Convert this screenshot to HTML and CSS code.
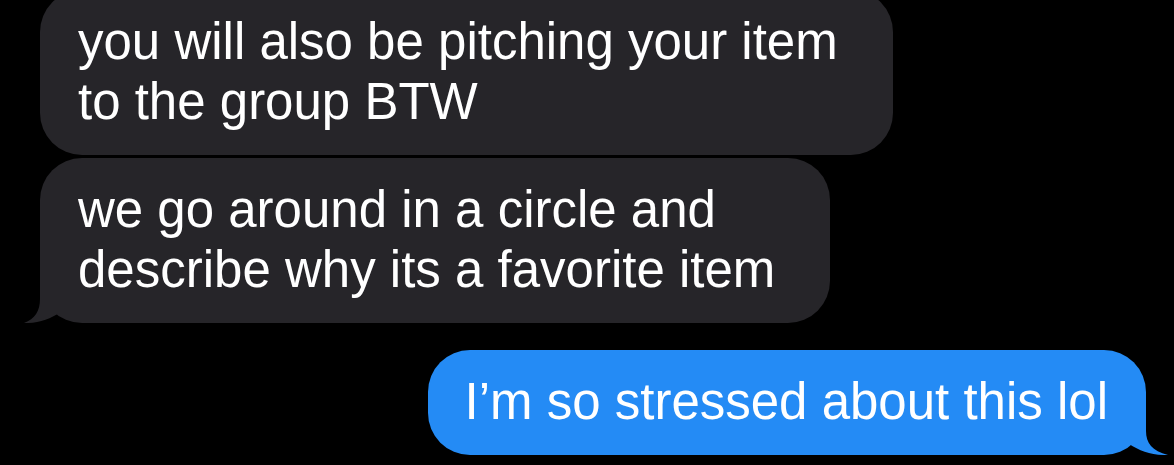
FILE: index.html
```html
<!DOCTYPE html>
<html lang="en">
<head>
  <meta charset="UTF-8">
  <meta name="viewport" content="width=device-width, initial-scale=1.0">
  <title>Messages</title>
  <link rel="stylesheet" href="styles.css">
</head>
<body>
  <div class="thread">
    <div class="bubble them">
      you will also be pitching your item<br>to the group BTW
    </div>
    <div class="bubble them last">
      we go around in a circle and<br>describe why its a favorite item
      <svg class="tail" viewBox="0 0 40 44" width="40" height="44">
        <path d="M16 0 L16 20 C16 32, 11 40, 0 44 C14 44.5, 26 40, 37 33 L37 0 Z" fill="#262529"/>
      </svg>
    </div>
    <div class="bubble me last">
      I’m so stressed about this lol
      <svg class="tail" viewBox="0 0 46 44" width="46" height="44">
        <path d="M24 0 L24 20 C24 32, 30 40, 46 44 C30 44.5, 18 40, 7 33 L7 0 Z" fill="#248bf5"/>
      </svg>
    </div>
  </div>
</body>
</html>
```

FILE: styles.css
```css
* {
  margin: 0;
  padding: 0;
  box-sizing: border-box;
}

body {
  background: #000;
  font-family: "Liberation Sans", Arial, sans-serif;
  overflow: hidden;
}

.thread {
  display: flex;
  flex-direction: column;
  align-items: flex-start;
  padding: 0 28px 0 40px;
  margin-top: -10px;
}

.bubble {
  position: relative;
  color: #fff;
  font-size: 51px;
  line-height: 60px;
  padding: 22px 55px 23px 38px;
  border-radius: 42px;
  white-space: nowrap;
}

.bubble.them {
  background: #262529;
}

.bubble.them + .bubble.them {
  margin-top: 3px;
}

.bubble.me {
  align-self: flex-end;
  background: #248bf5;
  padding: 22px 38px 23px 37px;
  margin-top: 27px;
}

.bubble .tail {
  position: absolute;
  bottom: 0;
  display: block;
}

.bubble.them .tail {
  left: -16px;
}

.bubble.me .tail {
  right: -22px;
}
```
